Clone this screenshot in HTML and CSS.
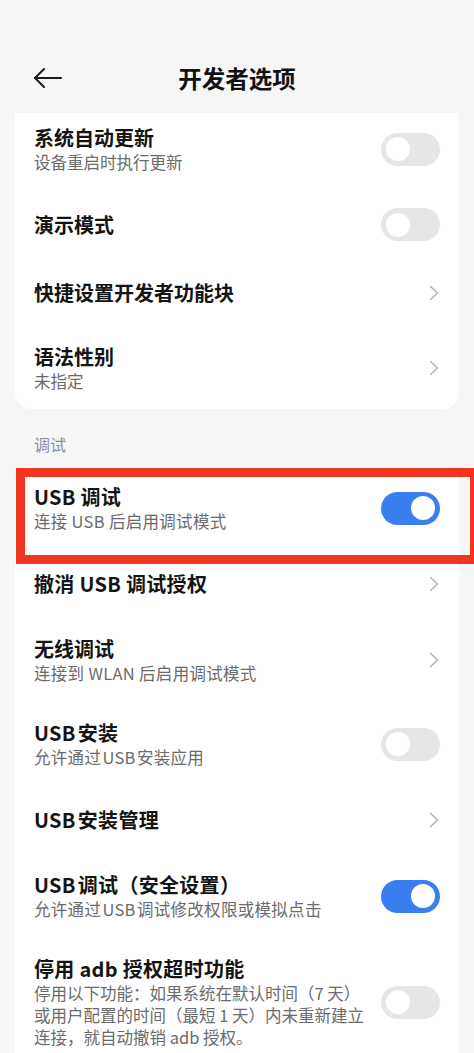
FILE: index.html
```html
<!DOCTYPE html>
<html lang="zh-CN">
<head>
<meta charset="utf-8">
<title>开发者选项</title>
<link rel="stylesheet" href="styles.css">
</head>
<body>
<div class="screen">
  <header class="topbar">
    <div class="bar">
      <div class="bar-left">
        <button class="back" aria-label="返回">
          <svg width="30" height="22" viewBox="0 0 30 22" fill="none" stroke="#1c1c1c" stroke-width="2" stroke-linecap="round" stroke-linejoin="round">
            <path d="M2 11 H28"/>
            <path d="M11 2 L2 11 L11 20"/>
          </svg>
        </button>
      </div>
      <h1 class="page-title">开发者选项</h1>
      <div class="bar-right"></div>
    </div>
  </header>

  <section class="card card-cut">
    <div class="row row-first">
      <div class="text">
        <div class="title">系统自动更新</div>
        <div class="sub">设备重启时执行更新</div>
      </div>
      <div class="trail"><span class="switch"></span></div>
    </div>
    <div class="row">
      <div class="text"><div class="title">演示模式</div></div>
      <div class="trail"><span class="switch"></span></div>
    </div>
    <div class="row">
      <div class="text"><div class="title">快捷设置开发者功能块</div></div>
      <div class="trail"><svg class="chev" width="10" height="16" viewBox="0 0 10 16"><path d="M1.5 1.5 L8.5 8 L1.5 14.5"/></svg></div>
    </div>
    <div class="row row-last">
      <div class="text">
        <div class="title">语法性别</div>
        <div class="sub">未指定</div>
      </div>
      <div class="trail"><svg class="chev" width="10" height="16" viewBox="0 0 10 16"><path d="M1.5 1.5 L8.5 8 L1.5 14.5"/></svg></div>
    </div>
  </section>

  <div class="group-label">调试</div>

  <section class="card card-open">
    <div class="row highlight">
      <div class="text">
        <div class="title wide">USB 调试</div>
        <div class="sub wide">连接 USB 后启用调试模式</div>
      </div>
      <div class="trail"><span class="switch on"></span></div>
      <span class="mark"></span>
    </div>
    <div class="row">
      <div class="text"><div class="title wide">撤消 USB 调试授权</div></div>
      <div class="trail"><svg class="chev" width="10" height="16" viewBox="0 0 10 16"><path d="M1.5 1.5 L8.5 8 L1.5 14.5"/></svg></div>
    </div>
    <div class="row">
      <div class="text">
        <div class="title">无线调试</div>
        <div class="sub wide">连接到 WLAN 后启用调试模式</div>
      </div>
      <div class="trail"><svg class="chev" width="10" height="16" viewBox="0 0 10 16"><path d="M1.5 1.5 L8.5 8 L1.5 14.5"/></svg></div>
    </div>
    <div class="row">
      <div class="text">
        <div class="title wide">USB<span class="thin"> </span>安装</div>
        <div class="sub wide">允许通过<span class="thin"> </span>USB<span class="thin"> </span>安装应用</div>
      </div>
      <div class="trail"><span class="switch"></span></div>
    </div>
    <div class="row">
      <div class="text"><div class="title wide">USB<span class="thin"> </span>安装管理</div></div>
      <div class="trail"><svg class="chev" width="10" height="16" viewBox="0 0 10 16"><path d="M1.5 1.5 L8.5 8 L1.5 14.5"/></svg></div>
    </div>
    <div class="row">
      <div class="text">
        <div class="title wide">USB<span class="thin"> </span>调试（安全设置）</div>
        <div class="sub wide">允许通过<span class="thin"> </span>USB<span class="thin"> </span>调试修改权限或模拟点击</div>
      </div>
      <div class="trail"><span class="switch on"></span></div>
    </div>
    <div class="row">
      <div class="text">
        <div class="title wide">停用 adb 授权超时功能</div>
        <div class="sub">停用以下功能：如果系统在默认时间（7 天）<br>或用户配置的时间（最短 1 天）内未重新建立<br>连接，就自动撤销 adb 授权。</div>
      </div>
      <div class="trail"><span class="switch"></span></div>
    </div>
  </section>
</div>
</body>
</html>
```

FILE: styles.css
```css
* {
  box-sizing: border-box;
}

html, body {
  margin: 0;
  padding: 0;
  background: #f6f6f6;
  overflow: hidden;
}

body {
  font-family: "Noto Sans CJK SC", "Noto Sans", sans-serif;
  color: #141414;
}

.screen {
  width: 474px;
  min-height: 1053px;
}

/* top bar */
.topbar {
  height: 113px;
  padding-top: 50px;
}

.bar {
  height: 56px;
  display: grid;
  grid-template-columns: 1fr auto 1fr;
  align-items: center;
}

.bar-left {
  padding-left: 33px;
  display: flex;
  align-items: center;
}

.back {
  border: 0;
  background: none;
  padding: 0;
  display: flex;
  cursor: pointer;
}

.page-title {
  margin: 0;
  font-size: 23.5px;
  font-weight: 700;
  line-height: 30px;
  color: #111;
}

/* cards */
.card {
  margin: 0 15px;
  background: #fff;
}

.card-cut {
  border-radius: 0 0 16px 16px;
}

.card-open {
  border-radius: 16px 16px 0 0;
}

.row {
  display: flex;
  align-items: center;
  gap: 8px;
  min-height: 68px;
  padding: 18px 19px;
}

.row-first {
  padding-top: 12px;
  padding-bottom: 17px;
}

.row-last {
  padding-top: 17px;
  padding-bottom: 17px;
}

.text {
  flex: 1;
  min-width: 0;
}

.title {
  font-size: 20px;
  font-weight: 700;
  line-height: 26px;
  color: #141414;
}

.sub {
  font-size: 16.5px;
  line-height: 22px;
  color: #6b6b6b;
}

/* Latin runs in these labels are set a touch wider */
.wide {
  letter-spacing: 0.3px;
}

.thin {
  letter-spacing: -2.5px;
}

.trail {
  flex: none;
  width: 59px;
  display: flex;
  justify-content: flex-end;
  align-items: center;
}

.chev {
  fill: none;
  stroke: #b4b4b4;
  stroke-width: 1.6;
  stroke-linecap: round;
  stroke-linejoin: round;
  margin-right: 1px;
}

/* switches */
.switch {
  position: relative;
  display: block;
  width: 59px;
  height: 33px;
  border-radius: 17px;
  background: #e6e6e6;
}

.switch::after {
  content: "";
  position: absolute;
  top: 4.5px;
  left: 5px;
  width: 24px;
  height: 24px;
  border-radius: 50%;
  background: #fff;
}

.switch.on {
  background: #3a7ef0;
}

.switch.on::after {
  left: auto;
  right: 5px;
}

/* section label */
.group-label {
  padding: 24px 34px 11px;
  font-size: 16px;
  line-height: 22px;
  color: #8a90a2;
}

/* annotation frame around the USB debugging row */
.highlight {
  position: relative;
}

.mark {
  position: absolute;
  top: 2px;
  left: 1px;
  right: -20px;
  height: 96px;
  border: 9px solid #f2361c;
  pointer-events: none;
}
```
